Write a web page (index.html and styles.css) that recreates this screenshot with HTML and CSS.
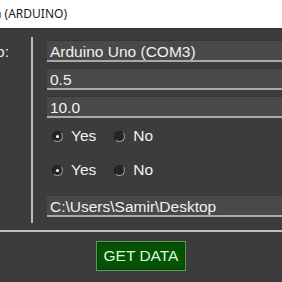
FILE: index.html
```html
<!DOCTYPE html>
<html lang="en">
<head>
  <meta charset="UTF-8">
  <meta name="viewport" content="width=device-width, initial-scale=1.0">
  <title>Data Acquisition (ARDUINO)</title>
  <link rel="stylesheet" href="styles.css">
</head>
<body>
  <div class="titlebar">
    <div class="title-clip">
      <span class="title">Data Acquisition (ARDUINO)</span>
    </div>
  </div>

  <div class="panel">
    <div class="form">
      <div class="labels">
        <div class="label"><span>Puerto:</span></div>
      </div>
      <div class="fields">
        <div class="entry">Arduino Uno (COM3)</div>
        <div class="entry">0.5</div>
        <div class="entry">10.0</div>
        <div class="radio-row first">
          <label class="option"><span class="radio checked"></span>Yes</label>
          <label class="option"><span class="radio"></span>No</label>
        </div>
        <div class="radio-row second">
          <label class="option"><span class="radio checked"></span>Yes</label>
          <label class="option"><span class="radio"></span>No</label>
        </div>
        <div class="entry path">C:\Users\Samir\Desktop</div>
      </div>
    </div>

    <div class="footer">
      <button class="button">GET DATA</button>
    </div>
  </div>
</body>
</html>
```

FILE: styles.css
```css
body {
  margin: 0;
  padding: 0;
  width: 282px;
  height: 282px;
  overflow: hidden;
  background-color: #3c3c3c;
  font-family: "Liberation Sans", Arial, sans-serif;
}
.titlebar {
  height: 29px;
  background-color: white;
  border-bottom: 1px solid #333333;
  box-sizing: border-box;
}
.title-clip {
  width: 67px;
  height: 100%;
  display: flex;
  justify-content: flex-end;
  align-items: center;
  white-space: nowrap;
}
.title {
  font-family: "Noto Sans", sans-serif;
  font-size: 12px;
  color: #1c1c1c;
  padding-bottom: 2px;
}
.panel {
  background-color: #3c3c3c;
}
.form {
  display: flex;
  padding-top: 8px;
  margin-bottom: 7px;
}
.labels {
  width: 31px;
  border-right: 2px solid #bdbdbd;
  padding-top: 3px;
}
.label {
  height: 22px;
  line-height: 21px;
  padding-top: 1px;
  padding-right: 22px;
  display: flex;
  justify-content: flex-end;
  white-space: nowrap;
  color: #ececec;
  font-size: 15.5px;
}
.fields {
  flex: 1;
  padding: 3px 0 6px 14px;
}
.entry {
  box-sizing: border-box;
  height: 22px;
  line-height: 21px;
  padding-left: 3px;
  margin-bottom: 6px;
  margin-right: -10px;
  background-color: #494949;
  border-top: 1px solid #363636;
  border-bottom: 2px solid #a9a9a9;
  color: #f2f2f2;
  font-size: 15.5px;
  white-space: nowrap;
}
.entry.path {
  margin-top: 13px;
  margin-bottom: 0;
}
.radio-row {
  height: 24px;
  display: flex;
  align-items: center;
  padding-left: 5px;
  color: #f2f2f2;
  font-size: 15.5px;
}
.radio-row.second {
  margin-top: 10px;
}
.option {
  display: flex;
  align-items: center;
  gap: 8px;
}
.option + .option {
  margin-left: 18px;
}
.radio {
  box-sizing: border-box;
  width: 11px;
  height: 11px;
  border-radius: 50%;
  background-color: #262626;
  border: 1px solid;
  border-color: #1d1d1d #9a9a9a #9a9a9a #1d1d1d;
  display: flex;
  align-items: center;
  justify-content: center;
}
.radio.checked::after {
  content: "";
  width: 3px;
  height: 3px;
  border-radius: 50%;
  background-color: #ffffff;
}
.footer {
  border-top: 2px solid #bdbdbd;
  padding-top: 9px;
  display: flex;
  justify-content: center;
}
.button {
  width: 90px;
  height: 30px;
  padding: 0;
  background-color: #045304;
  border: 1px solid #5f9a5f;
  box-shadow: inset 0 0 0 1px #0b3a0b;
  color: #dff5df;
  font-family: "Liberation Sans", Arial, sans-serif;
  font-size: 15.5px;
}
```
